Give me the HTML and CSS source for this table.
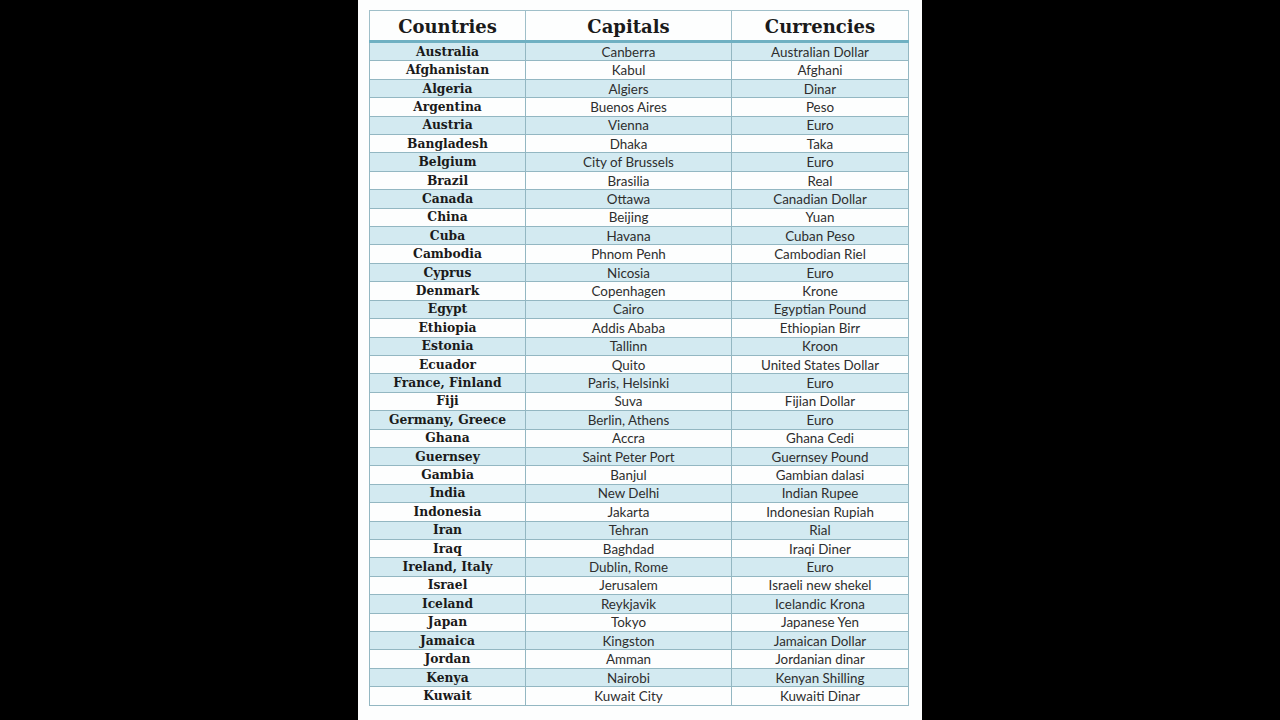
FILE: index.html
```html
<!DOCTYPE html>
<html>
<head>
<meta charset="utf-8">
<link rel="stylesheet" href="styles.css">
</head>
<body>
<div class="panel">
<table class="tbl">
<colgroup><col class="c1"><col class="c2"><col class="c3"></colgroup>
<thead>
<tr><th>Countries</th><th>Capitals</th><th>Currencies</th></tr>
</thead>
<tbody>
<tr><td>Australia</td><td>Canberra</td><td>Australian Dollar</td></tr>
<tr><td>Afghanistan</td><td>Kabul</td><td>Afghani</td></tr>
<tr><td>Algeria</td><td>Algiers</td><td>Dinar</td></tr>
<tr><td>Argentina</td><td>Buenos Aires</td><td>Peso</td></tr>
<tr><td>Austria</td><td>Vienna</td><td>Euro</td></tr>
<tr><td>Bangladesh</td><td>Dhaka</td><td>Taka</td></tr>
<tr><td>Belgium</td><td>City of Brussels</td><td>Euro</td></tr>
<tr><td>Brazil</td><td>Brasilia</td><td>Real</td></tr>
<tr><td>Canada</td><td>Ottawa</td><td>Canadian Dollar</td></tr>
<tr><td>China</td><td>Beijing</td><td>Yuan</td></tr>
<tr><td>Cuba</td><td>Havana</td><td>Cuban Peso</td></tr>
<tr><td>Cambodia</td><td>Phnom Penh</td><td>Cambodian Riel</td></tr>
<tr><td>Cyprus</td><td>Nicosia</td><td>Euro</td></tr>
<tr><td>Denmark</td><td>Copenhagen</td><td>Krone</td></tr>
<tr><td>Egypt</td><td>Cairo</td><td>Egyptian Pound</td></tr>
<tr><td>Ethiopia</td><td>Addis Ababa</td><td>Ethiopian Birr</td></tr>
<tr><td>Estonia</td><td>Tallinn</td><td>Kroon</td></tr>
<tr><td>Ecuador</td><td>Quito</td><td>United States Dollar</td></tr>
<tr><td>France, Finland</td><td>Paris, Helsinki</td><td>Euro</td></tr>
<tr><td>Fiji</td><td>Suva</td><td>Fijian Dollar</td></tr>
<tr><td>Germany, Greece</td><td>Berlin, Athens</td><td>Euro</td></tr>
<tr><td>Ghana</td><td>Accra</td><td>Ghana Cedi</td></tr>
<tr><td>Guernsey</td><td>Saint Peter Port</td><td>Guernsey Pound</td></tr>
<tr><td>Gambia</td><td>Banjul</td><td>Gambian dalasi</td></tr>
<tr><td>India</td><td>New Delhi</td><td>Indian Rupee</td></tr>
<tr><td>Indonesia</td><td>Jakarta</td><td>Indonesian Rupiah</td></tr>
<tr><td>Iran</td><td>Tehran</td><td>Rial</td></tr>
<tr><td>Iraq</td><td>Baghdad</td><td>Iraqi Diner</td></tr>
<tr><td>Ireland, Italy</td><td>Dublin, Rome</td><td>Euro</td></tr>
<tr><td>Israel</td><td>Jerusalem</td><td>Israeli new shekel</td></tr>
<tr><td>Iceland</td><td>Reykjavik</td><td>Icelandic Krona</td></tr>
<tr><td>Japan</td><td>Tokyo</td><td>Japanese Yen</td></tr>
<tr><td>Jamaica</td><td>Kingston</td><td>Jamaican Dollar</td></tr>
<tr><td>Jordan</td><td>Amman</td><td>Jordanian dinar</td></tr>
<tr><td>Kenya</td><td>Nairobi</td><td>Kenyan Shilling</td></tr>
<tr><td>Kuwait</td><td>Kuwait City</td><td>Kuwaiti Dinar</td></tr>
</tbody>
</table>
</div>
</body>
</html>
```
FILE: styles.css
```css
html, body {
  margin: 0;
  padding: 0;
  background: #000;
  height: 720px;
  overflow: hidden;
}
.panel {
  width: 553px;
  height: 710px;
  margin: 0 0 0 358px;
  background: #fdfefe;
  padding: 10px 0 0 11px;
}
.tbl {
  border-collapse: collapse;
  width: 539px;
  table-layout: fixed;
  color: #1e1e1e;
}
.c1 { width: 156px; }
.c2 { width: 206px; }
.c3 { width: 177px; }
.tbl th {
  height: 27px;
  padding: 2px 0 0 0;
  font-family: "DejaVu Serif", "Liberation Serif", serif;
  font-weight: bold;
  font-size: 18px;
  color: #1a1a1a;
  border: 1px solid #9fbfc9;
  border-bottom: 3px solid #6fb0c2;
  text-align: center;
  vertical-align: middle;
  background: #fdfefe;
}
.tbl td {
  height: 17.42px;
  padding: 0;
  border: 1px solid #93b7c2;
  text-align: center;
  vertical-align: middle;
  font-family: "Lato", "Open Sans", sans-serif;
  font-size: 13.4px;
  line-height: 16px;
  color: #2e2e2e;
}
.tbl td:first-child {
  font-family: "DejaVu Serif", "Liberation Serif", serif;
  font-weight: bold;
  font-size: 12.3px;
  color: #1a1a1a;
}
.tbl tbody tr:nth-child(odd) td {
  background: #d3eaf1;
}
.tbl tbody tr:nth-child(even) td {
  background: #fdfefe;
}
```
